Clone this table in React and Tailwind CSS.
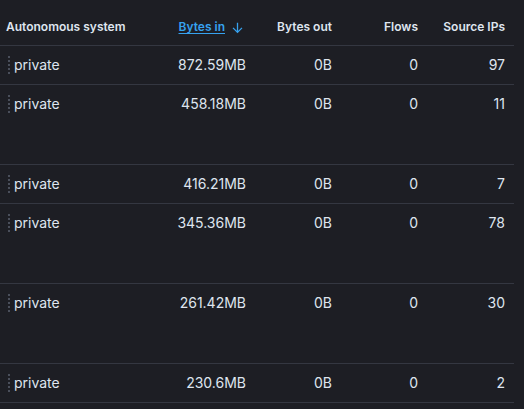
import React from "react";

const rows = [
  { as: "private", bytesIn: "872.59MB", bytesOut: "0B", flows: "0", ips: "97", tall: false },
  { as: "private", bytesIn: "458.18MB", bytesOut: "0B", flows: "0", ips: "11", tall: true },
  { as: "private", bytesIn: "416.21MB", bytesOut: "0B", flows: "0", ips: "7", tall: false },
  { as: "private", bytesIn: "345.36MB", bytesOut: "0B", flows: "0", ips: "78", tall: true },
  { as: "private", bytesIn: "261.42MB", bytesOut: "0B", flows: "0", ips: "30", tall: true },
  { as: "private", bytesIn: "230.6MB", bytesOut: "0B", flows: "0", ips: "2", tall: false },
];

const cols = "grid grid-cols-[168px_86px_86px_86px_88px]";

export default function App() {
  return (
    <div
      className="w-[524px] h-[409px] bg-[#1d1e24] text-[#dfe5ef] overflow-hidden"
      style={{ fontFamily: "Inter, 'Liberation Sans', sans-serif" }}
    >
      <div className="w-[514px]">
        {/* header */}
        <div className={`${cols} h-[46px] items-end pb-[10px] border-b border-[#343741] text-[12px] font-semibold leading-4`}>
          <div className="pl-[6px]">Autonomous system</div>
          <div className="flex justify-end items-center gap-[6px] pr-[10px] text-[#36a2ef]">
            <span className="underline underline-offset-2">Bytes in</span>
            <svg width="13" height="13" viewBox="0 0 16 16" fill="none" stroke="#36a2ef" strokeWidth="1.6">
              <path d="M8 2v12M2.5 8.5 8 14l5.5-5.5" />
            </svg>
          </div>
          <div className="text-right pr-[8px]">Bytes out</div>
          <div className="text-right pr-[8px]">Flows</div>
          <div className="text-right pr-[9px]">Source IPs</div>
        </div>

        {rows.map((r, i) => (
          <div
            key={i}
            className={`${cols} ${r.tall ? "h-[80px]" : "h-[39px]"} pt-[9px] border-b border-[#343741] text-[14px] leading-5 items-start`}
          >
            <div className="flex items-center pl-[8px]">
              <span className="h-[18px] border-l-2 border-dotted border-[#4a4f5b] mr-[4px]" />
              <span>{r.as}</span>
            </div>
            <div className="text-right pr-[8px]">{r.bytesIn}</div>
            <div className="text-right pr-[8px]">{r.bytesOut}</div>
            <div className="text-right pr-[8px]">{r.flows}</div>
            <div className="text-right pr-[9px]">{r.ips}</div>
          </div>
        ))}
      </div>
    </div>
  );
}
